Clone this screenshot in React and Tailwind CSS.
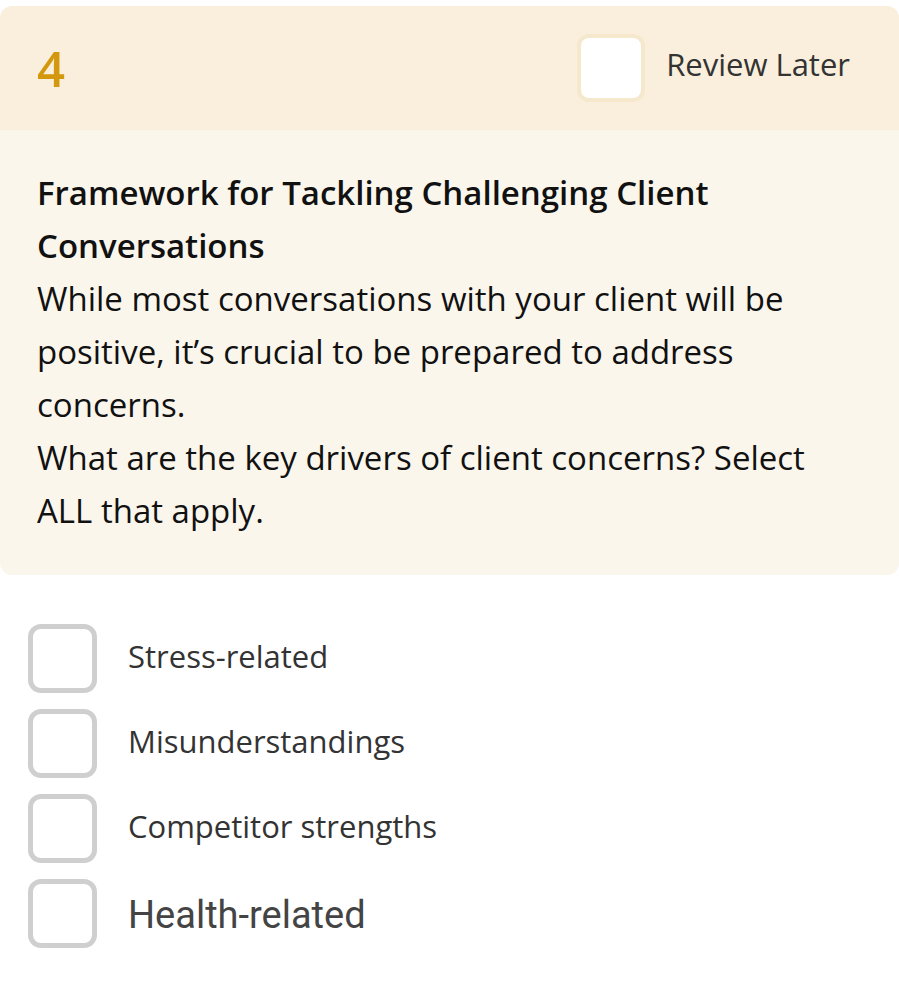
import React, { useState } from 'react';

const options = [
  { label: 'Stress-related', roboto: false },
  { label: 'Misunderstandings', roboto: false },
  { label: 'Competitor strengths', roboto: false },
  { label: 'Health-related', roboto: true },
];

const App = () => {
  const [checked, setChecked] = useState({});
  const [review, setReview] = useState(false);

  return (
    <div className="min-h-[992px] bg-white pt-[6px] font-['Open_Sans',sans-serif]">
      {/* Question card */}
      <div className="rounded-[12px] overflow-hidden">
        <div className="flex h-[124px] items-center justify-between bg-[#f9efdc] pl-[37px] pr-[49px]">
          <span className="text-[49px] font-semibold leading-none text-[#d4980e]">4</span>
          <button
            onClick={() => setReview(!review)}
            className="flex items-center gap-[21px]"
          >
            <span className="block h-[68px] w-[68px] rounded-[12px] border-[4px] border-[#f6e8cc] bg-white"></span>
            <span className="pb-[8px] text-[31px] text-[#333333]">Review Later</span>
          </button>
        </div>

        <div className="bg-[#fbf6ec] px-[37px] pt-[36px] pb-[38px] text-[33px] leading-[53px] text-[#111111]">
          <p className="font-semibold">Framework for Tackling Challenging Client Conversations</p>
          <p>While most conversations with your client will be positive, it’s crucial to be prepared to address concerns.</p>
          <p>What are the key drivers of client concerns? Select ALL that apply.</p>
        </div>
      </div>

      {/* Answer options */}
      <div className="mt-[49px] flex flex-col gap-[16px] pl-[28px]">
        {options.map((opt, i) => (
          <label key={i} className="flex items-center gap-[31px] cursor-pointer">
            <input
              type="checkbox"
              className="hidden"
              checked={!!checked[i]}
              onChange={() => setChecked({ ...checked, [i]: !checked[i] })}
            />
            <span className="block h-[69px] w-[69px] shrink-0 rounded-[13px] border-[5px] border-[#cfcfcf] bg-white"></span>
            {opt.roboto ? (
              <span className="pt-[4px] font-['Roboto',sans-serif] text-[38px] text-[#444444]">{opt.label}</span>
            ) : (
              <span className="pb-[5px] text-[31px] text-[#333333]">{opt.label}</span>
            )}
          </label>
        ))}
      </div>
    </div>
  );
};

export default App;
